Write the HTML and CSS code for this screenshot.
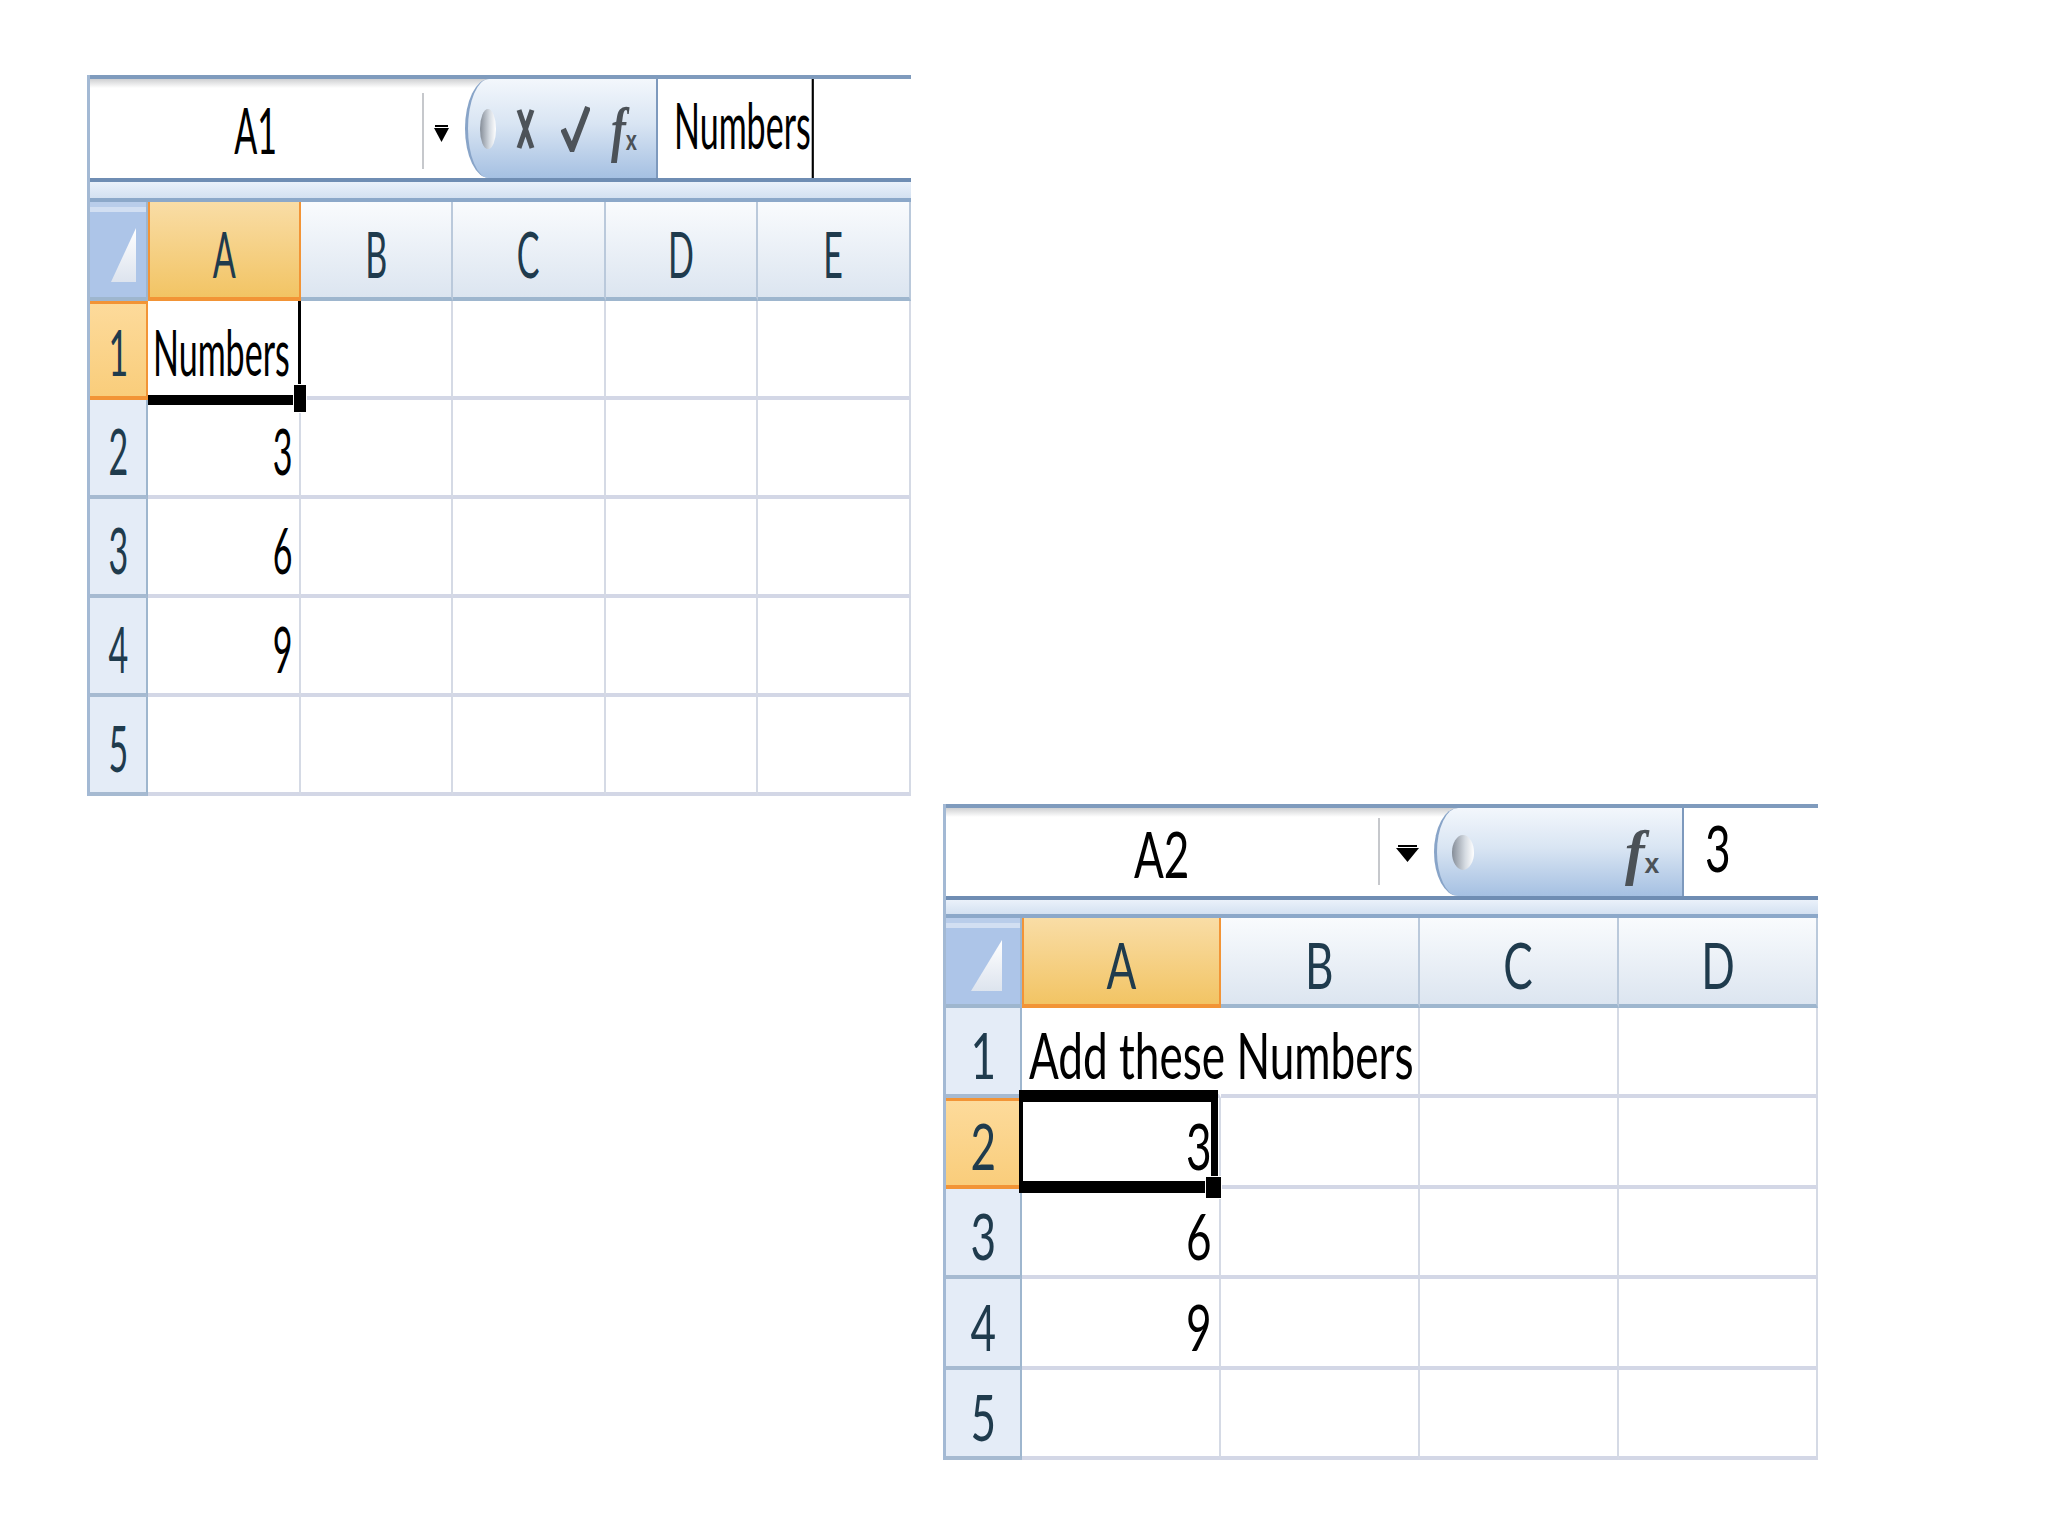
FILE: index.html
```html
<!DOCTYPE html>
<html lang="en">
<head>
    <meta charset="UTF-8">
    <title>Add these Numbers</title>
    <link rel="stylesheet" href="styles.css">
</head>
<body>
    <div class="page">

        <!-- First capture: A1 selected -->
        <div class="sheet sheet-1">
            <div class="fbar">
                <div class="namebox"><span class="txt">A1</span></div>
                <div class="sep"></div>
                <div class="drop">
                    <svg width="15" height="17" viewBox="0 0 15 17"><rect x="1" y="0" width="13" height="2" fill="#000"/><polygon points="0,3 15,3 7.5,17" fill="#000"/></svg>
                </div>
                <div class="pill">
                    <span class="knob"></span>
                    <svg class="ic-x" width="19" height="42" viewBox="0 0 19 42"><path d="M3 2 L16 40 M16 2 L3 40" stroke="#4d5359" stroke-width="5" fill="none"/></svg>
                    <svg class="ic-check" width="29" height="47" viewBox="0 0 29 47"><path d="M2 24 L11 44 L27 2" stroke="#4d5359" stroke-width="6" fill="none"/></svg>
                    <span class="fx">f<span class="fx-x">x</span></span>
                </div>
                <div class="formula"><span class="txt caret">Numbers</span></div>
            </div>
            <div class="band"></div>
            <div class="grid">
                <div class="corner"><svg width="56" height="95" viewBox="0 0 56 95"><defs><linearGradient id="tri1" x1="0" y1="0" x2="0" y2="1"><stop offset="0" stop-color="#ffffff"/><stop offset="1" stop-color="#dde4ee"/></linearGradient></defs><polygon points="46,26 46,80 21,80" fill="url(#tri1)"/></svg></div>
                <div class="ch sel"><span class="txt">A</span></div>
                <div class="ch"><span class="txt">B</span></div>
                <div class="ch"><span class="txt">C</span></div>
                <div class="ch"><span class="txt">D</span></div>
                <div class="ch"><span class="txt">E</span></div>

                <div class="rh sel"><span class="txt">1</span></div>
                <div class="cell active"><span class="txt">Numbers</span></div>
                <div class="cell"></div><div class="cell"></div><div class="cell"></div><div class="cell"></div>

                <div class="rh"><span class="txt">2</span></div>
                <div class="cell num"><span class="txt">3</span></div>
                <div class="cell"></div><div class="cell"></div><div class="cell"></div><div class="cell"></div>

                <div class="rh"><span class="txt">3</span></div>
                <div class="cell num"><span class="txt">6</span></div>
                <div class="cell"></div><div class="cell"></div><div class="cell"></div><div class="cell"></div>

                <div class="rh"><span class="txt">4</span></div>
                <div class="cell num"><span class="txt">9</span></div>
                <div class="cell"></div><div class="cell"></div><div class="cell"></div><div class="cell"></div>

                <div class="rh"><span class="txt">5</span></div>
                <div class="cell"></div>
                <div class="cell"></div><div class="cell"></div><div class="cell"></div><div class="cell"></div>
            </div>
        </div>

        <!-- Second capture: A2 selected -->
        <div class="sheet sheet-2">
            <div class="fbar">
                <div class="namebox"><span class="txt">A2</span></div>
                <div class="sep"></div>
                <div class="drop">
                    <svg width="23" height="17" viewBox="0 0 23 17"><rect x="2" y="0" width="19" height="2" fill="#000"/><polygon points="0,3 23,3 11.5,17" fill="#000"/></svg>
                </div>
                <div class="pill">
                    <span class="knob"></span>
                    <span class="fx">f<span class="fx-x">x</span></span>
                </div>
                <div class="formula"><span class="txt">3</span></div>
            </div>
            <div class="band"></div>
            <div class="grid">
                <div class="corner"><svg width="74" height="86" viewBox="0 0 74 86"><defs><linearGradient id="tri2" x1="0" y1="0" x2="0" y2="1"><stop offset="0" stop-color="#ffffff"/><stop offset="1" stop-color="#dde4ee"/></linearGradient></defs><polygon points="56,22 56,73 25,73" fill="url(#tri2)"/></svg></div>
                <div class="ch sel"><span class="txt">A</span></div>
                <div class="ch"><span class="txt">B</span></div>
                <div class="ch"><span class="txt">C</span></div>
                <div class="ch"><span class="txt">D</span></div>

                <div class="rh"><span class="txt">1</span></div>
                <div class="cell spill"><span class="txt">Add these Numbers</span></div>
                <div class="cell"></div><div class="cell"></div><div class="cell"></div>

                <div class="rh sel"><span class="txt">2</span></div>
                <div class="cell num active"><span class="txt">3</span></div>
                <div class="cell"></div><div class="cell"></div><div class="cell"></div>

                <div class="rh"><span class="txt">3</span></div>
                <div class="cell num"><span class="txt">6</span></div>
                <div class="cell"></div><div class="cell"></div><div class="cell"></div>

                <div class="rh"><span class="txt">4</span></div>
                <div class="cell num"><span class="txt">9</span></div>
                <div class="cell"></div><div class="cell"></div><div class="cell"></div>

                <div class="rh"><span class="txt">5</span></div>
                <div class="cell"></div>
                <div class="cell"></div><div class="cell"></div><div class="cell"></div>
            </div>
        </div>

    </div>
</body>
</html>
```

FILE: styles.css
```css
* {
    margin: 0;
    padding: 0;
    box-sizing: border-box;
}

body {
    background: #fff;
    font-family: Lato, "Liberation Sans", sans-serif;
    color: #000;
}

.page {
    width: 2048px;
    height: 1536px;
    overflow: hidden;
    padding-top: 75px;
}

/* Sheet frame */
.sheet {
    border-left: 3px solid #a3b9d4;
}

.sheet-1 {
    --sx: 0.54;
    width: 824px;
    margin-left: 87px;
}

.sheet-2 {
    --sx: 0.7;
    width: 875px;
    margin-left: 943px;
    margin-top: 8px;
}

.txt {
    display: inline-block;
    font-size: 63px;
    line-height: 1;
    white-space: nowrap;
    transform: scaleX(var(--sx));
    transform-origin: center bottom;
}

/* Formula bar */
.fbar {
    display: flex;
    border-top: 4px solid #7f9bbd;
    border-bottom: 4px solid #6f8db3;
    background: linear-gradient(to bottom, #cfd0d2 0, #ffffff 9px);
}

.fbar > * {
    flex-shrink: 0;
}

.sheet-1 .fbar { height: 107px; }
.sheet-2 .fbar { height: 96px; }

.namebox {
    display: flex;
    justify-content: center;
    align-items: flex-end;
    color: #000;
}

.sheet-1 .namebox { width: 332px; padding-bottom: 17px; }
.sheet-2 .namebox { width: 432px; padding-bottom: 11px; }

.sep {
    width: 2px;
    background: #c6c8cc;
}

.sheet-1 .sep { margin: 14px 0 9px; }
.sheet-2 .sep { margin: 10px 0 11px; }

.drop {
    display: flex;
    justify-content: center;
    align-items: flex-start;
}

.sheet-1 .drop { width: 41px; padding-top: 46px; padding-right: 7px; }
.sheet-2 .drop { width: 54px; padding-top: 37px; }

.pill {
    display: flex;
    align-items: center;
    border-left: 3px solid #88a4c8;
    border-right: 2px solid #7d99bd;
    border-radius: 24px 0 0 24px / 50% 0 0 50%;
    background: linear-gradient(to bottom, #f3f7fc 0%, #d9e5f3 45%, #a5c0e2 100%);
}

.sheet-1 .pill { width: 193px; }
.sheet-2 .pill { width: 250px; }

.knob {
    border-radius: 50%;
    background: linear-gradient(to right, #858d98, #d5dbe2 60%, #ffffff);
}

.sheet-1 .knob { width: 16px; height: 40px; margin-left: 12px; }
.sheet-2 .knob { width: 22px; height: 35px; margin-left: 15px; }

.sheet-1 .ic-x { margin-left: 20px; }
.sheet-1 .ic-check { margin-left: 26px; }

.fx {
    display: inline-block;
    font-family: "Liberation Serif", serif;
    font-style: italic;
    font-weight: bold;
    font-size: 62px;
    line-height: 1;
    color: #4b5157;
    transform-origin: left center;
}

.fx-x {
    font-family: "Liberation Sans", sans-serif;
    font-style: normal;
    font-weight: bold;
    font-size: 28px;
}

.sheet-1 .fx { margin-left: 21px; transform: scaleX(0.72); }
.sheet-2 .fx { margin-left: auto; margin-right: 21px; transform: scaleX(0.95); }

.formula {
    flex: 1 1 0;
    min-width: 0;
    display: flex;
    align-items: flex-end;
    background: #fff;
}

.formula .txt { transform-origin: left bottom; }

.sheet-1 .formula { padding-left: 16px; }
.sheet-2 .formula { padding-left: 21px; padding-bottom: 17px; }

.caret {
    align-self: stretch;
    display: flex;
    align-items: flex-end;
    padding-bottom: 22px;
    padding-right: 2px;
    border-right: 4px solid #000;
}

/* Strip under the formula bar */
.band {
    border-bottom: 4px solid #8ca8c9;
    background: linear-gradient(to bottom, #eaf1fa, #d4e1f1);
}

.sheet-1 .band { height: 20px; }
.sheet-2 .band { height: 18px; }

/* Grid */
.grid {
    display: grid;
}

.sheet-1 .grid {
    grid-template-columns: 58px repeat(5, 152.6px);
    grid-template-rows: repeat(6, 99px);
}

.sheet-2 .grid {
    grid-template-columns: 76px repeat(4, 199px);
    grid-template-rows: 90px repeat(5, 90.4px);
}

.corner {
    display: flex;
    align-items: flex-start;
    background: #adc5e8;
    box-shadow: inset 0 5px 0 #b9cdea, inset 0 10px 0 #d2dff2;
    border-right: 2px solid #9eb6ce;
    border-bottom: 4px solid #9eb6ce;
}

.ch {
    display: flex;
    justify-content: center;
    align-items: flex-end;
    color: #1f3b4d;
    background: linear-gradient(to bottom, #f9fbfd, #dce5f0);
    border-right: 2px solid #bac9db;
    border-bottom: 4px solid #9eb6ce;
}

.ch.sel {
    background: linear-gradient(to bottom, #f9dda6, #f2c464);
    border-left: 2px solid #f29436;
    border-right: 2px solid #f29436;
    border-bottom-color: #f29436;
}

.rh {
    display: flex;
    justify-content: center;
    align-items: flex-end;
    color: #1f3b4d;
    background: #e4ecf7;
    border-right: 2px solid #9eb6ce;
    border-bottom: 4px solid #a6bad1;
}

.rh.sel {
    background: linear-gradient(to bottom, #fddb9c, #f9cd7b);
    box-shadow: inset 0 3px 0 #f29436;
    border-right-color: #f29436;
    border-bottom-color: #f29436;
}

.cell {
    display: flex;
    align-items: flex-end;
    background: #fff;
    border-right: 2px solid #d5dae5;
    border-bottom: 4px solid #d3d7e6;
}

.cell .txt { transform-origin: left bottom; }

.cell.num { justify-content: flex-end; }
.cell.num .txt { transform-origin: right bottom; }

.cell.spill { border-right-color: #fff; }

.sheet-1 .ch { padding-bottom: 12px; }
.sheet-1 .rh, .sheet-1 .cell { padding-bottom: 13px; }
.sheet-1 .cell { padding-left: 5px; }
.sheet-1 .cell.num { padding-right: 6px; }

.sheet-2 .ch { padding-bottom: 8px; }
.sheet-2 .rh, .sheet-2 .cell { padding-bottom: 8px; }
.sheet-2 .cell { padding-left: 7px; }
.sheet-2 .cell.num { padding-right: 7px; }

/* Active cell outline and fill handle */
.cell.active { position: relative; }

.cell.active::before,
.cell.active::after {
    content: "";
    position: absolute;
    z-index: 2;
}

.sheet-1 .cell.active::before {
    left: 0;
    top: 0;
    right: -2px;
    bottom: -9px;
    border-right: 3px solid #000;
    border-bottom: 10px solid #000;
}

.sheet-1 .cell.active::after {
    right: -7px;
    bottom: -16px;
    width: 12px;
    height: 27px;
    background: #000;
    box-shadow: 0 0 0 1px #fff;
}

.sheet-2 .cell.active::before {
    left: -3px;
    top: -8px;
    right: 1px;
    bottom: -8px;
    border: 12px solid #000;
    border-left-width: 4px;
    border-right-width: 7px;
}

.sheet-2 .cell.active::after {
    right: -2px;
    bottom: -13px;
    width: 15px;
    height: 21px;
    background: #000;
    box-shadow: 0 0 0 1px #fff;
}
```
